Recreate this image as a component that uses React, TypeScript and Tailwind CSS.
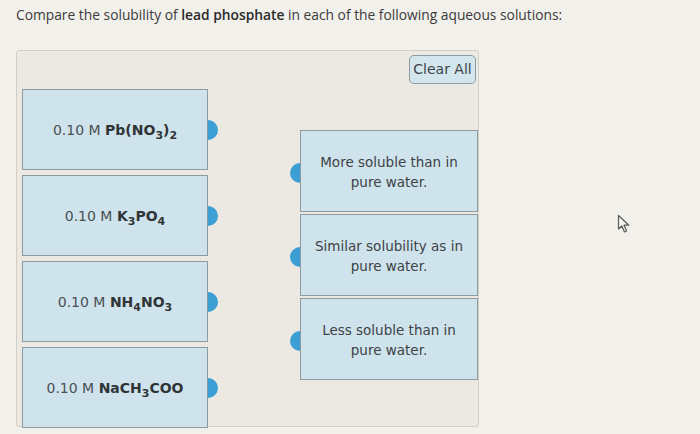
import type { ReactNode } from 'react';

function Sub({ children }: { children: ReactNode }) {
  return <span className="relative top-[4px] text-[11px]">{children}</span>;
}

const solutions: { key: string; formula: ReactNode }[] = [
  {
    key: 'pbno3',
    formula: (
      <>
        Pb(NO<Sub>3</Sub>)<Sub>2</Sub>
      </>
    ),
  },
  {
    key: 'k3po4',
    formula: (
      <>
        K<Sub>3</Sub>PO<Sub>4</Sub>
      </>
    ),
  },
  {
    key: 'nh4no3',
    formula: (
      <>
        NH<Sub>4</Sub>NO<Sub>3</Sub>
      </>
    ),
  },
  {
    key: 'nach3coo',
    formula: (
      <>
        NaCH<Sub>3</Sub>COO
      </>
    ),
  },
];

const answers = [
  ['More soluble than in', 'pure water.'],
  ['Similar solubility as in', 'pure water.'],
  ['Less soluble than in', 'pure water.'],
];

function SolutionCard({ formula }: { formula: ReactNode }) {
  return (
    <div className="relative flex h-[81px] w-[186px] items-center justify-center border border-[#8d9ba1] bg-[#cfe3ec] pt-[3px] text-[14px] text-[#4a4f52]">
      <span>
        0.10 M <b className="text-[#2f3436]">{formula}</b>
      </span>
      <span className="absolute right-[-11px] top-[30px] h-[20px] w-[10px] rounded-r-full bg-[#3b9fd4]" />
    </div>
  );
}

function AnswerCard({ lines }: { lines: string[] }) {
  return (
    <div className="relative flex h-[82px] w-[178px] flex-col items-center justify-center border border-[#8d9ba1] bg-[#cfe3ec] pt-[2px] text-center text-[13.5px] leading-[20px] text-[#3d4245]">
      {lines.map((line) => (
        <span key={line}>{line}</span>
      ))}
      <span className="absolute left-[-11px] top-[32px] h-[20px] w-[10px] rounded-l-full bg-[#3b9fd4]" />
    </div>
  );
}

export default function App() {
  return (
    <div className="relative h-[434px] w-[700px] overflow-hidden bg-[#f2f0eb] font-['DejaVu_Sans',sans-serif]">
      <p className="px-[16px] pt-[5px] font-['Open_Sans',sans-serif] text-[13.8px] text-[#3b3b3b]">
        Compare the solubility of <b className="font-semibold text-[#2a2a2a]">lead phosphate</b> in each of the following aqueous solutions:
      </p>

      <div className="ml-[16px] mt-[24px] h-[377px] w-[463px] rounded-[3px] border border-[#d2cfc9] bg-[#ece9e3]">
        <div className="flex justify-end pr-[2px] pt-[4px]">
          <button className="h-[29px] w-[67px] rounded-[5px] border border-[#8e9a9f] bg-[#d3e6ee] text-[14px] text-[#3f4447]">
            Clear All
          </button>
        </div>

        <div className="mt-[5px] flex justify-between">
          <div className="ml-[5px] flex flex-col gap-[5px]">
            {solutions.map((s) => (
              <SolutionCard key={s.key} formula={s.formula} />
            ))}
          </div>
          <div className="mt-[41px] flex flex-col gap-[2px]">
            {answers.map((lines) => (
              <AnswerCard key={lines[0]} lines={lines} />
            ))}
          </div>
        </div>
      </div>

      {/* mouse pointer */}
      <svg className="absolute left-[617px] top-[214px]" width="14" height="20" viewBox="0 0 14 20">
        <path d="M1.5 1.5 L1.5 15 L4.8 12 L7.5 18 L9.6 17 L7 11.2 L11.8 11.2 Z" fill="#f7f6f3" stroke="#5a5a5a" strokeWidth="1.2" strokeLinejoin="round" />
      </svg>
    </div>
  );
}
